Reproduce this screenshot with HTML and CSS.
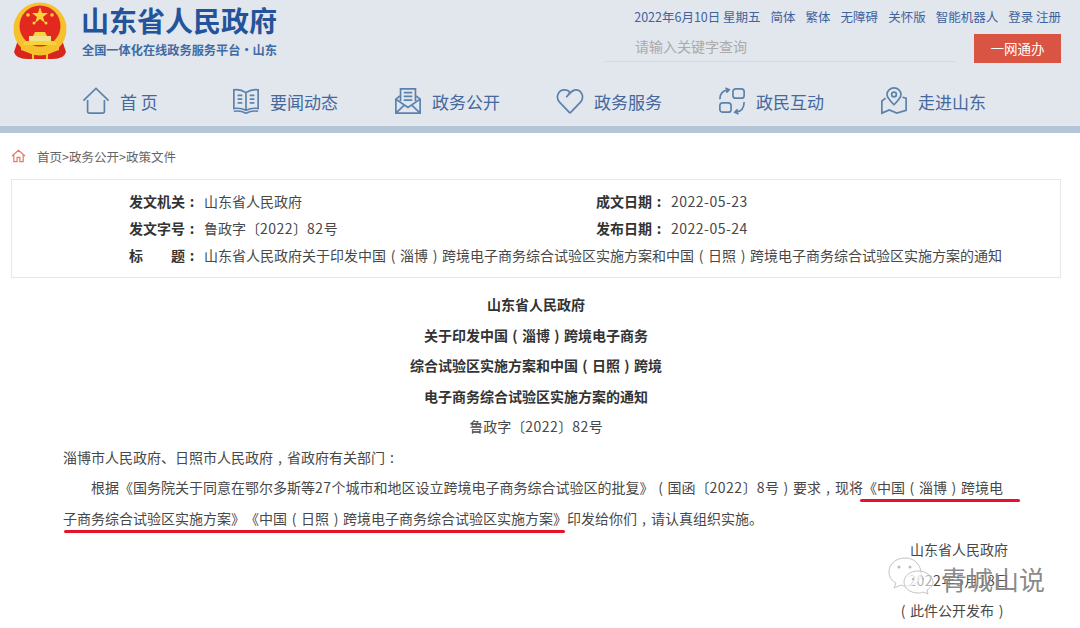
FILE: index.html
```html
<!DOCTYPE html>
<html lang="zh-CN">
<head>
    <meta charset="UTF-8">
    <title>山东省人民政府</title>
    <link rel="stylesheet" href="styles.css">
</head>
<body>
    <header class="header">
        <div class="top">
            <div class="brand">
                <svg class="emblem" viewBox="0 0 54 58">
                    <path d="M5 38 L1 50 Q3 57 14 57 L40 57 Q51 57 53 50 L49 38 Z" fill="#d9261c"/>
                    <circle cx="27" cy="27" r="26.5" fill="#f5c22e"/>
                    <circle cx="27" cy="24" r="20.5" fill="#e3291f"/>
                    <path d="M27 5 l2 6 6 0 -5 4 2 6 -5 -4 -5 4 2 -6 -5 -4 6 0z" fill="#f8d33a"/>
                    <circle cx="15" cy="13" r="1.8" fill="#f8d33a"/>
                    <circle cx="39" cy="13" r="1.8" fill="#f8d33a"/>
                    <circle cx="21" cy="21" r="1.5" fill="#f8d33a"/>
                    <circle cx="33" cy="21" r="1.5" fill="#f8d33a"/>
                    <path d="M20 34 L22 30 L32 30 L34 34 Z M12 39 L42 39 L44 43 L10 43 Z" fill="#f8d33a"/>
                    <rect x="16" y="34" width="22" height="5" fill="#f5e08a"/>
                    <path d="M8 44 Q27 52 46 44 L46 48 Q27 56 8 48 Z" fill="#f5c22e"/>
                    <path d="M20 57 L20 51 L34 51 L34 57" fill="none" stroke="#f5c22e" stroke-width="2"/>
                </svg>
                <div class="brand-text">
                    <div class="brand-name">山东省人民政府</div>
                    <div class="brand-sub">全国一体化在线政务服务平台·山东</div>
                </div>
            </div>
            <div class="tools">
                <div class="tool-links">
                    <span>2022年6月10日 星期五</span>
                    <a>简体</a><a>繁体</a><a>无障碍</a><a>关怀版</a><a>智能机器人</a>
                    <span class="login"><a>登录</a> <a>注册</a></span>
                </div>
                <div class="search-row">
                    <div class="search-box">请输入关键字查询</div>
                    <div class="one-net">一网通办</div>
                </div>
            </div>
        </div>
        <nav class="nav">
            <a class="nav-item">
                <svg class="nav-icon" viewBox="0 0 30 30"><path d="M1.500 14.500 L15 1.500 L28.500 14.500 M6 14 V26 Q6 28 8 28 H22 Q24 28 24 26 V14"/></svg>
                <span>首 页</span>
            </a>
            <a class="nav-item">
                <svg class="nav-icon" viewBox="0 0 30 30"><path d="M2 3 Q9 2 15 6 Q21 2 28 3 V23 Q21 22 15 25 Q9 22 2 23 Z M15 6 V25 M6 9 H11 M6 13 H11 M6 17 H11 M19 9 H24 M19 13 H24 M19 17 H24 M2 26 Q9 25 15 28 Q21 25 28 26"/></svg>
                <span>要闻动态</span>
            </a>
            <a class="nav-item">
                <svg class="nav-icon" viewBox="0 0 30 30"><path d="M2 13 V28 H28 V13 L23 9 M7 9 L2 13 L15 22 L28 13 M2 28 L11 19.500 M28 28 L19 19.500 M7 15 V2 H23 V15 M10.500 6 H19.500 M10.500 10 H19.500 M10.500 14 H19.500"/></svg>
                <span>政务公开</span>
            </a>
            <a class="nav-item">
                <svg class="nav-icon" viewBox="0 0 30 30"><path d="M15 28 L3.500 16 C-1 10 3 3 9 3 C12 3 14 4.500 15 6 L11 11 M15 28 L26.500 16 C31 10 27 3 21 3 C18 3 16 5 11 11"/></svg>
                <span>政务服务</span>
            </a>
            <a class="nav-item">
                <svg class="nav-icon" viewBox="0 0 30 30"><rect x="16" y="2" width="12" height="10" rx="3"/><rect x="2" y="17" width="12" height="10" rx="3"/><path d="M2 13 Q2 4 11 3 M8 1 L12 3 L9 6 M28 16 Q28 26 19 27 M22 29 L18 27 L21 24"/></svg>
                <span>政民互动</span>
            </a>
            <a class="nav-item">
                <svg class="nav-icon" viewBox="0 0 30 30"><path d="M15 19 C10 14 7.500 11 7.500 8 A7.500 7 0 0 1 22.500 8 C22.500 11 20 14 15 19 Z"/><circle cx="15" cy="8" r="2.500"/><path d="M6 12 L2 15 V28 L10 24.500 L18 28 L28 25 V12 L24 11"/></svg>
                <span>走进山东</span>
            </a>
        </nav>
    </header>
    <div class="band"></div>

    <div class="crumb">
        <svg class="crumb-icon" viewBox="0 0 16 14"><path d="M1 7 L8 1 L15 7 M3 6 V13 H6.500 V8.500 H9.500 V13 H13 V6"/></svg>
        <span>首页&gt;政务公开&gt;政策文件</span>
    </div>

    <section class="info">
        <div class="info-row">
            <div class="info-cell"><b>发文机关<i class="c">:</i></b>山东省人民政府</div>
            <div class="info-cell"><b>成文日期<i class="c">:</i></b><span class="num">2022-05-23</span></div>
        </div>
        <div class="info-row">
            <div class="info-cell"><b>发文字号<i class="c">:</i></b>鲁政字〔<span class="num">2022</span>〕<span class="num">82</span>号</div>
            <div class="info-cell"><b>发布日期<i class="c">:</i></b><span class="num">2022-05-24</span></div>
        </div>
        <div class="info-row">
            <div class="info-cell"><b class="spread"><i>标</i><i>题</i></b><b class="colon"><i class="c">:</i></b>山东省人民政府关于印发中国<i class="c">(</i>淄博<i class="c">)</i>跨境电子商务综合试验区实施方案和中国<i class="c">(</i>日照<i class="c">)</i>跨境电子商务综合试验区实施方案的通知</div>
        </div>
    </section>

    <article class="doc">
        <h2>山东省人民政府</h2>
        <h2>关于印发中国<i class="c">(</i>淄博<i class="c">)</i>跨境电子商务</h2>
        <h2>综合试验区实施方案和中国<i class="c">(</i>日照<i class="c">)</i>跨境</h2>
        <h2>电子商务综合试验区实施方案的通知</h2>
        <p class="center">鲁政字〔<span class="num">2022</span>〕<span class="num">82</span>号</p>
        <p>淄博市人民政府、日照市人民政府<i class="c">,</i>省政府有关部门<i class="c">:</i></p>
        <p class="indent">根据《国务院关于同意在鄂尔多斯等<span class="num">27</span>个城市和地区设立跨境电子商务综合试验区的批复》<i class="c">(</i>国函〔<span class="num">2022</span>〕<span class="num">8</span>号<i class="c">)</i>要求<i class="c">,</i>现将《中国<i class="c">(</i>淄博<i class="c">)</i>跨境电<br>子商务综合试验区实施方案》《中国<i class="c">(</i>日照<i class="c">)</i>跨境电子商务综合试验区实施方案》印发给你们<i class="c">,</i>请认真组织实施。</p>
        <div class="sign">
            <p>山东省人民政府</p>
            <p class="num">2022年5月18日</p>
            <p class="sign-note"><i class="c">(</i>此件公开发布<i class="c">)</i></p>
        </div>
    </article>

    <!-- red pen marks drawn over the text -->
    <div class="ink ink-first"></div>
    <div class="ink ink-second"></div>

    <div class="watermark">
        <svg class="wm-icon" viewBox="0 0 52 38">
            <path d="M17 1 C8 1 1 7 1 15 C1 20 4 24 8 26 L6 31 L13 28 C15 29 17 29 19 29 C28 29 34 22 33 15 C32 7 26 1 17 1 Z"/>
            <path d="M30 14 C22 14 16 19 16 25 C16 31 22 36 30 36 C32 36 33 36 35 35 L40 37 L39 33 C43 31 45 28 45 25 C45 19 38 14 30 14 Z" />
            <circle cx="11" cy="10" r="1.500"/><circle cx="22" cy="10" r="1.500"/>
            <circle cx="25" cy="22" r="1.200"/><circle cx="35" cy="22" r="1.200"/>
        </svg>
        <span>青城山说</span>
    </div>
</body>
</html>
```

FILE: styles.css
```css
* {
    box-sizing: border-box;
}

body {
    margin: 0;
    height: 628px;
    overflow: hidden;
    position: relative;
    background: #fff;
    color: #484848;
    font-family: "Noto Sans CJK SC", "Noto Sans", sans-serif;
    font-size: 14px;
    text-spacing-trim: space-all;
}

p, h2 {
    margin: 0;
}

/* fullwidth punctuation sits centred in its cell on the original */
.c {
    display: inline-block;
    width: 14px;
    font-style: normal;
    text-align: center;
    text-indent: 0;
}

.num {
    letter-spacing: .5px;
}

.header {
    height: 126px;
    background: #e2e6ed;
}

.top {
    display: flex;
    justify-content: space-between;
    height: 76px;
    padding: 2px 19px 0 13px;
}

.brand {
    display: flex;
    gap: 14px;
}

.emblem {
    width: 54px;
    height: 58px;
}

.brand-name {
    font-size: 28px;
    line-height: 36px;
    font-weight: 700;
    color: #23539a;
}

.brand-sub {
    margin-top: 3px;
    padding-left: 1px;
    font-size: 12.200px;
    line-height: 18px;
    font-weight: 700;
    color: #3f6ba5;
}

.tools {
    width: 456px;
    padding-top: 6px;
}

.tool-links {
    display: flex;
    justify-content: flex-end;
    gap: 10px;
    font-size: 12.500px;
    line-height: 18px;
    color: #3e639d;
    white-space: nowrap;
}

.search-row {
    display: flex;
    justify-content: space-between;
    align-items: flex-start;
    margin-top: 8px;
}

.search-box {
    width: 350px;
    height: 28px;
    padding-left: 30px;
    font-size: 14px;
    line-height: 24px;
    color: #aaa;
    border-bottom: 1px solid #d3dae6;
}

.one-net {
    width: 87px;
    height: 29px;
    background: #d95443;
    color: #fff;
    font-size: 13.500px;
    line-height: 28px;
    text-align: center;
}

.nav {
    display: flex;
    gap: 56px;
    height: 50px;
    padding-left: 82px;
}

.nav-item {
    display: flex;
    align-items: center;
    gap: 10px;
    height: 50px;
    font-size: 17px;
    color: #44699e;
}

.nav-item:first-child {
    width: 94px;
}

.nav-icon {
    width: 28px;
    height: 28px;
    flex: none;
    fill: none;
    stroke: #5b82ad;
    stroke-width: 1.800;
}

.band {
    height: 7px;
    background: #b4c5d8;
}

.crumb {
    display: flex;
    align-items: center;
    gap: 11px;
    height: 46px;
    padding-left: 11px;
    font-size: 12.500px;
    color: #666;
}

.crumb-icon {
    width: 15px;
    height: 14px;
    fill: none;
    stroke: #e8776a;
    stroke-width: 1.300;
}

.info {
    margin: 0 19px 0 11px;
    height: 99px;
    padding: 8px 0 0 117px;
    border: 1px solid #e8e8e8;
}

.info-row {
    display: flex;
    height: 27px;
    line-height: 27px;
}

.info-cell {
    white-space: nowrap;
}

.info-cell:first-child:not(:only-child) {
    width: 467px;
}

.info-cell b {
    color: #333;
    display: inline-block;
    width: 75px;
}

.info-cell b.spread {
    display: inline-flex;
    justify-content: space-between;
    width: 56px;
}

.info-cell b.colon {
    width: 19px;
}

.spread i {
    font-style: normal;
}

.doc {
    padding: 11px 40px 0 63px;
    line-height: 30.500px;
}

.doc h2 {
    padding-right: 31px;
    font-size: 14px;
    text-align: center;
    color: #333;
}

.center {
    padding-right: 31px;
    text-align: center;
}

.indent {
    text-indent: 28px;
}

.sign {
    width: 196px;
    margin-top: 1px;
    margin-left: 798px;
    text-align: center;
}

.sign-note {
    padding-right: 14px;
}

.ink {
    position: absolute;
    height: 3px;
    border-radius: 2px;
    background: #e8112d;
}

.ink-first {
    left: 860px;
    top: 499px;
    width: 160px;
}

.ink-second {
    left: 64px;
    top: 530px;
    width: 501px;
}

.watermark {
    position: absolute;
    left: 888px;
    top: 556px;
    display: flex;
    gap: 1px;
    font-size: 26px;
    line-height: 46px;
    color: rgba(85, 85, 85, .7);
    text-shadow: 0 0 2px #fff;
}

.wm-icon {
    width: 52px;
    height: 38px;
    flex: none;
    margin-top: 1px;
    fill: rgba(255, 255, 255, .6);
    stroke: #c4c4c4;
    stroke-width: 1;
}

.wm-icon circle {
    fill: #bbb;
    stroke: none;
}
```
